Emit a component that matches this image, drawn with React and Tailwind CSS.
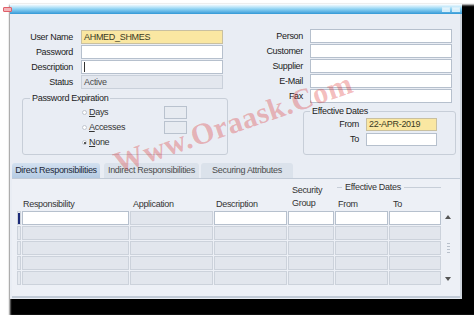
export default function App() {
  const leftFields = [
    { label: "User Name", value: "AHMED_SHMES", kind: "yellow" },
    { label: "Password", value: "", kind: "white" },
    { label: "Description", value: "", kind: "cursor" },
    { label: "Status", value: "Active", kind: "gray" },
  ];
  const rightFields = ["Person", "Customer", "Supplier", "E-Mail", "Fax"];

  const fieldClass = (kind) => {
    if (kind === "yellow") return "bg-[#fae7a2] border-[#c9c0a0] text-[#3a3a22]";
    if (kind === "gray") return "bg-[#e3e7ee] border-[#c9d0da] text-[#4a4a4a]";
    return "bg-white border-[#b6c0cd] text-[#222]";
  };

  const cols = "grid grid-cols-[4px_107px_83px_73px_46px_53px_52px] gap-x-px";

  return (
    <div className="w-[474px] h-[315px] bg-white overflow-hidden font-['Liberation_Sans',Arial,sans-serif] text-[9px] leading-[11px] tracking-[-0.3px] text-[#222]">
      {/* Window */}
      <div className="relative ml-[10px] mt-[4px] w-[452px] h-[295px] flex flex-col shadow-[8px_9px_2px_8px_#000]">
        {/* Title bar */}
        <div className="h-[10px] bg-linear-to-b from-white via-[#8ed3f3] to-[#2f98d6] flex items-center justify-end pr-[2px] gap-[2px]">
          <div className="w-[8px] h-[5px] bg-white/70 border border-[#d6eefa]" />
          <div className="w-[8px] h-[5px] bg-white/70 border border-[#d6eefa]" />
        </div>
        <div className="absolute -left-[8px] top-[1px] w-[10px] h-[8px] flex items-center justify-center">
          <div className="w-[9px] h-[5px] bg-[#f3b3b8] border border-[#e0606a] rounded-[1px]" />
        </div>

        {/* Body */}
        <div className="relative flex-1 bg-[#e9edf4] border-r-2 border-[#cfd5de] flex flex-col">
          {/* Top form area */}
          <div className="h-[149px] pt-[15px] flex">
            {/* Left column */}
            <div className="w-[220px] flex flex-col">
              <div className="grid grid-cols-[63px_142px] gap-x-[8px] gap-y-px mt-px">
                {leftFields.map((f) => (
                  <div key={f.label} className="contents">
                    <div className="h-[14px] flex items-center justify-end">{f.label}</div>
                    <div className={`h-[14px] border flex items-center pl-[2px] ${fieldClass(f.kind)}`}>
                      {f.kind === "cursor" && <div className="w-px h-[10px] bg-[#333]" />}
                      {f.value}
                    </div>
                  </div>
                ))}
              </div>
              <fieldset className="ml-[12px] mt-[4px] w-[206px] h-[62px] border border-[#c7ced8] rounded-[3px]">
                <legend className="ml-[7px] px-[2px] leading-[10px]">Password Expiration</legend>
                <div className="grid grid-cols-[82px_23px] pl-[59px] pt-[2px]">
                  <div className="h-[15px] flex items-center gap-[2px] text-[#333]">
                    <span className="w-[5px] h-[5px] rounded-full border border-[#c0c6cf] bg-white" />
                    <span><u>D</u>ays</span>
                  </div>
                  <div className="h-[15px] flex items-center">
                    <div className="w-[23px] h-[13px] border border-[#b9c2ce] bg-[#e7ebf1]" />
                  </div>
                  <div className="h-[15px] flex items-center gap-[2px] text-[#333]">
                    <span className="w-[5px] h-[5px] rounded-full border border-[#c0c6cf] bg-white" />
                    <span><u>A</u>ccesses</span>
                  </div>
                  <div className="h-[15px] flex items-center">
                    <div className="w-[23px] h-[13px] border border-[#b9c2ce] bg-[#e7ebf1]" />
                  </div>
                  <div className="h-[15px] flex items-center gap-[2px] text-[#333]">
                    <span className="w-[5px] h-[5px] rounded-full bg-white border border-[#c0c6cf] flex items-center justify-center">
                      <span className="w-[2px] h-[2px] rounded-full bg-[#222]" />
                    </span>
                    <span><u>N</u>one</span>
                  </div>
                </div>
              </fieldset>
            </div>

            {/* Right column */}
            <div className="flex flex-col">
              <div className="grid grid-cols-[73px_142px] gap-x-[7px] gap-y-px">
                {rightFields.map((l) => (
                  <div key={l} className="contents">
                    <div className="h-[14px] flex items-center justify-end">{l}</div>
                    <div className="h-[14px] border border-[#b6c0cd] bg-white" />
                  </div>
                ))}
              </div>
              <fieldset className="ml-[73px] mt-[3px] w-[153px] h-[49px] border border-[#c7ced8] rounded-[3px]">
                <legend className="ml-[6px] px-[2px] leading-[10px]">Effective Dates</legend>
                <div className="grid grid-cols-[53px_71px] gap-x-[7px] gap-y-[2px] pl-[2px] pt-[2px]">
                  <div className="h-[13px] flex items-center justify-end">From</div>
                  <div className="h-[13px] border border-[#c9c0a0] bg-[#fae7a2] text-[#3a3a22] flex items-center pl-[2px]">22-APR-2019</div>
                  <div className="h-[13px] flex items-center justify-end">To</div>
                  <div className="h-[13px] border border-[#b6c0cd] bg-white" />
                </div>
              </fieldset>
            </div>
          </div>

          {/* Tabs */}
          <div className="h-[15px] pl-[2px] flex items-end whitespace-nowrap">
            <div className="w-[88px] h-[15px] rounded-t-[3px] bg-linear-to-b from-[#d3e1f0] to-[#b5cbe3] text-[#1c2838] flex items-center justify-center">Direct Responsibilities</div>
            <div className="ml-[4px] w-[95px] h-[15px] rounded-t-[3px] bg-[#dbe2eb] text-[#4d4d4d] flex items-center justify-center">Indirect Responsibilities</div>
            <div className="ml-[2px] w-[92px] h-[15px] rounded-t-[3px] bg-[#dbe2eb] text-[#4d4d4d] flex items-center justify-center">Securing Attributes</div>
          </div>

          {/* Tab panel */}
          <div className="ml-[2px] w-[448px] flex-1 mb-[1px] border-t border-b-2 border-[#c2cbd7] bg-[#edf0f6] pl-[5px] flex flex-col">
            {/* Header */}
            <div className={`${cols} h-[32px] items-end pb-[3px] text-[#333]`}>
              <div />
              <div className="pl-[1px]">Responsibility</div>
              <div className="pl-[3px]">Application</div>
              <div className="pl-[2px]">Description</div>
              <div className="pl-[4px] leading-[13px]">Security<br />Group</div>
              <div className="col-span-2 relative h-[31px]">
                <div className="absolute top-[3px] left-0 right-0 flex items-center gap-[3px]">
                  <div className="w-[5px] h-px bg-[#c7ced8] ml-[2px]" />
                  <span>Effective Dates</span>
                  <div className="flex-1 h-px bg-[#c7ced8]" />
                </div>
                <div className="absolute bottom-0 left-[3px]">From</div>
                <div className="absolute bottom-0 left-[58px]">To</div>
              </div>
            </div>

            {/* Rows */}
            <div className="flex">
              <div className="flex flex-col gap-y-px">
                {[0, 1, 2, 3, 4].map((r) => (
                  <div key={r} className={`${cols} h-[14px]`}>
                    <div className="border border-[#ccd2db] bg-[#e4e8ee] flex items-center">
                      {r === 0 && <div className="w-[3px] h-[11px] bg-[#1b2a78]" />}
                    </div>
                    {[0, 1, 2, 3, 4, 5].map((c) => {
                      const white = r === 0 && c !== 1;
                      return (
                        <div
                          key={c}
                          className={white ? "border border-[#b6c0cd] bg-white" : "border border-[#ccd2db] bg-[#e2e6ed]"}
                        />
                      );
                    })}
                  </div>
                ))}
              </div>
              {/* Scrollbar */}
              <div className="ml-[3px] w-[8px] h-[74px] flex flex-col items-center justify-between py-[4px]">
                <svg width="6" height="4" viewBox="0 0 6 4"><path d="M3 0 L6 4 L0 4 Z" fill="#555" /></svg>
                <div className="flex flex-col gap-[2px] items-center">
                  <div className="w-[3px] h-px bg-[#b8c0cb]" />
                  <div className="w-[3px] h-px bg-[#b8c0cb]" />
                  <div className="w-[3px] h-px bg-[#b8c0cb]" />
                  <div className="w-[3px] h-px bg-[#b8c0cb]" />
                </div>
                <svg width="6" height="4" viewBox="0 0 6 4"><path d="M0 0 L6 0 L3 4 Z" fill="#555" /></svg>
              </div>
            </div>
          </div>

          {/* Watermark */}
          <div className="absolute left-[98px] top-[92px] w-[250px] text-center pointer-events-none rotate-[-19deg] font-['Liberation_Serif',serif] font-bold text-[30px] leading-[34px] tracking-[0.5px] text-[#d81c1c]/30">
            Www.Oraask.Com
          </div>
        </div>
      </div>
    </div>
  );
}
